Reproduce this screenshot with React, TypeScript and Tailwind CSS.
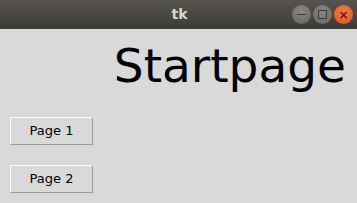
import React from "react";

const WindowButton: React.FC<{ kind: "min" | "max" | "close" }> = ({ kind }) => {
    const bg = kind === "close"
        ? "bg-[radial-gradient(circle_at_50%_35%,#f27a4a,#e0541f)]"
        : "bg-[radial-gradient(circle_at_50%_35%,#8a8780,#66645e)]";
    return (
        <div className={`w-[19px] h-[19px] rounded-full flex items-center justify-center ${bg}`}>
            {kind === "min" && <div className="w-[9px] h-[1.5px] bg-[#3a3935]" />}
            {kind === "max" && <div className="w-[9px] h-[9px] border border-[#3a3935]" />}
            {kind === "close" && <span className="text-[12px] leading-none text-[#5a1d08] font-bold font-['DejaVu_Sans',sans-serif]">×</span>}
        </div>
    );
};

const PageButton: React.FC<{ label: string }> = ({ label }) => (
    <button className="w-[83px] h-[28px] bg-[#d9d9d9] border border-t-white border-l-white border-r-[#9c9c9c] border-b-[#9c9c9c] text-[13px] text-black font-['DejaVu_Sans',sans-serif] flex items-center justify-center">
        {label}
    </button>
);

export default function App() {
    return (
        <div className="w-[357px] h-[203px] flex flex-col bg-[#d9d9d9] overflow-hidden">
            <div className="h-[29px] shrink-0 bg-gradient-to-b from-[#57544e] to-[#3c3b37] flex items-center relative">
                <span className="flex-1 text-center text-[14px] font-bold text-[#d8d5cd] font-['DejaVu_Sans',sans-serif] pl-[2px]">tk</span>
                <div className="absolute right-[4px] top-[5px] flex gap-[2px]">
                    <WindowButton kind="min" />
                    <WindowButton kind="max" />
                    <WindowButton kind="close" />
                </div>
            </div>
            <div className="flex-1 flex flex-col">
                <div className="flex justify-end pr-[11px] pt-[10px]">
                    <span className="text-[47px] leading-[54px] text-black font-['DejaVu_Sans',sans-serif]">Startpage</span>
                </div>
                <div className="flex flex-col gap-[20px] pl-[10px] pt-[24px]">
                    <PageButton label="Page 1" />
                    <PageButton label="Page 2" />
                </div>
            </div>
        </div>
    );
}
